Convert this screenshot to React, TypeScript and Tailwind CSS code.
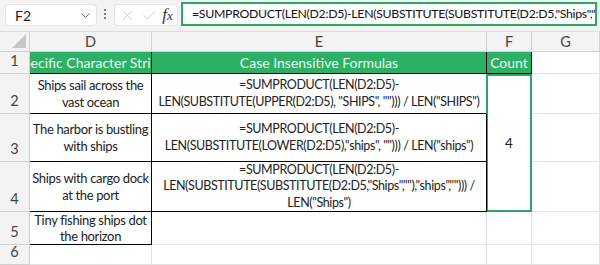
import { ChevronDown, X, Check } from 'lucide-react';

const FONT = { fontFamily: 'Lato, "Liberation Sans", sans-serif' };

const GRID = 'border-r border-b border-[#e1e1e1]';
const HEAD = 'bg-[#f3f3f3] border-r border-b border-[#d0d0d0] text-[#444] flex items-center justify-center text-[14.5px]';

const RowNum = ({ n }: { n: number }) => (
  <div className={`${HEAD} !items-end pb-[1px]`}>{n}</div>
);

const FormulaBar = () => (
  <div className="h-[32px] bg-[#f3f3f3] flex items-start pl-[5px] border-b border-[#dcdcdc]">
    <div className="mt-[4px] w-[92px] h-[22px] bg-white rounded-[4px] border border-[#e3e3e3] flex items-center justify-between pl-[9px] pr-[3px] text-[14px] text-[#222]">
      <span>F2</span>
      <ChevronDown size={15} strokeWidth={1.5} className="text-[#555]" />
    </div>
    <div className="mt-[9px] ml-[7px] mr-[8px] flex flex-col gap-[2px]">
      <span className="w-[2px] h-[2px] bg-[#555] rounded-full" />
      <span className="w-[2px] h-[2px] bg-[#555] rounded-full" />
      <span className="w-[2px] h-[2px] bg-[#555] rounded-full" />
    </div>
    <div className="mt-[4px] w-[64px] h-[22px] bg-white rounded-[4px] border border-[#e3e3e3] flex items-center justify-around px-[2px]">
      <X size={17} strokeWidth={1.1} className="text-[#c4c4c4]" />
      <Check size={17} strokeWidth={1.1} className="text-[#c4c4c4]" />
      <span className="text-[17px] italic text-[#333]" style={{ fontFamily: '"Liberation Serif", serif' }}>
        f<span className="text-[13px]">x</span>
      </span>
    </div>
    <div className="mt-[2px] ml-[3px] mr-[3px] flex-1 h-[24px] bg-white border-2 border-[#2ea664] flex items-center pl-[9px] overflow-hidden whitespace-nowrap text-[12.3px] tracking-[-0.3px] text-[#111]">
      =SUMPRODUCT(LEN(D2:D5)-LEN(SUBSTITUTE(SUBSTITUTE(D2:D5,"Ships",""),"ships",""))) / LEN("Ships")
    </div>
  </div>
);

const cell = 'flex items-center justify-center text-center whitespace-nowrap leading-[16.5px] text-[#222]';
const txt = `${cell} text-[13px] tracking-[-0.35px]`;
const ftxt = `${cell} text-[12.5px] tracking-[-0.4px]`;
const box = 'border-r border-b border-black';

export default function App() {
  return (
    <div className="w-[600px] h-[265px] overflow-hidden bg-white" style={FONT}>
      <FormulaBar />
      <div className="grid grid-cols-[30px_122px_335px_45px_68px] grid-rows-[20px_22px_40px_48px_50px_33px_20px]">
        {/* column headers */}
        <div className={`${HEAD} relative`}>
          <div className="absolute right-[3px] bottom-[3px] w-0 h-0 border-l-[14px] border-l-transparent border-b-[14px] border-b-[#c6c6c6]" />
        </div>
        <div className={HEAD}>D</div>
        <div className={HEAD}>E</div>
        <div className={HEAD}>F</div>
        <div className={HEAD}>G</div>

        {/* row 1 */}
        <RowNum n={1} />
        <div className={`bg-[#2bb064] ${box} overflow-hidden whitespace-nowrap flex justify-center items-center text-[14px] text-[#eefaf2]`}>
          <span>Specific Character String</span>
        </div>
        <div className={`bg-[#2bb064] ${box} flex justify-center items-center text-[14px] text-[#eefaf2]`}>
          Case Insensitive Formulas
        </div>
        <div className={`bg-[#2bb064] ${box} flex justify-center items-center text-[14px] text-[#eefaf2]`}>
          Count
        </div>
        <div className={GRID} />

        {/* row 2 */}
        <RowNum n={2} />
        <div className={`${txt} ${box}`}>Ships sail across the<br />vast ocean</div>
        <div className={`${ftxt} ${box}`}>
          =SUMPRODUCT(LEN(D2:D5)-<br />LEN(SUBSTITUTE(UPPER(D2:D5), "SHIPS", ""))) / LEN("SHIPS")
        </div>
        <div className="row-span-3 border-2 border-[#2ea664] flex items-center justify-center text-[13.5px] text-[#222] -ml-px">
          4
        </div>
        <div className={GRID} />

        {/* row 3 */}
        <RowNum n={3} />
        <div className={`${txt} ${box}`}>The harbor is bustling<br />with ships</div>
        <div className={`${ftxt} ${box}`}>
          =SUMPRODUCT(LEN(D2:D5)-<br />LEN(SUBSTITUTE(LOWER(D2:D5),"ships", ""))) / LEN("ships")
        </div>
        <div className={GRID} />

        {/* row 4 */}
        <RowNum n={4} />
        <div className={`${txt} ${box}`}>Ships with cargo dock<br />at the port</div>
        <div className={`${ftxt} ${box}`}>
          =SUMPRODUCT(LEN(D2:D5)-<br />LEN(SUBSTITUTE(SUBSTITUTE(D2:D5,"Ships",""),"ships",""))) /<br />LEN("Ships")
        </div>
        <div className={GRID} />

        {/* row 5 */}
        <RowNum n={5} />
        <div className={`${txt} ${box}`}>Tiny fishing ships dot<br />the horizon</div>
        <div className={GRID} />
        <div className={GRID} />
        <div className={GRID} />

        {/* row 6 */}
        <RowNum n={6} />
        <div className={GRID} />
        <div className={GRID} />
        <div className={GRID} />
        <div className={GRID} />
      </div>
    </div>
  );
}
